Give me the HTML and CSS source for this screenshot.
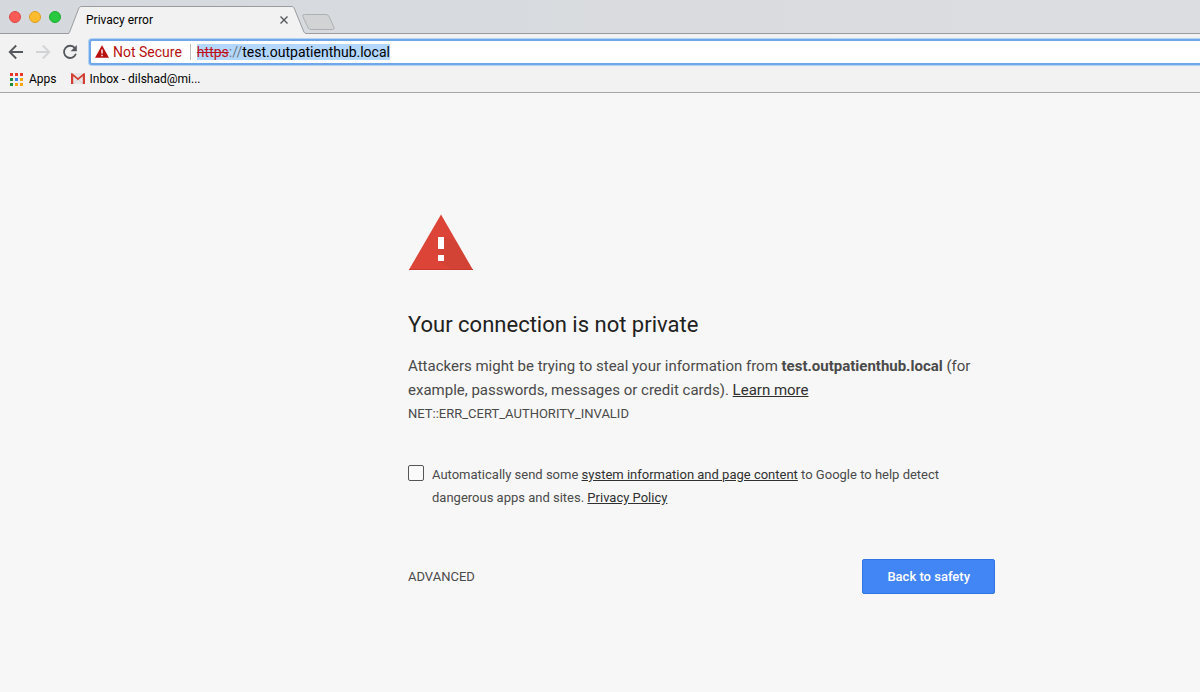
FILE: index.html
```html
<!DOCTYPE html>
<html lang="en">
<head>
  <meta charset="UTF-8">
  <meta name="viewport" content="width=device-width, initial-scale=1.0">
  <title>Privacy error</title>
  <link rel="stylesheet" href="styles.css">
</head>
<body>
  <header class="browser">
    <div class="tab-strip">
      <div class="window-controls">
        <button class="dot dot-close" aria-label="Close window"></button>
        <button class="dot dot-minimize" aria-label="Minimize window"></button>
        <button class="dot dot-zoom" aria-label="Zoom window"></button>
      </div>
      <div class="tab">
        <svg class="tab-shape" viewBox="0 0 238 28" aria-hidden="true">
          <path d="M0 27.500 C1 27.500 1.500 26.500 2 25 L10.500 3 C11.500 .8 12 .5 14 .5 H223 C225 .5 225.500 .8 226.500 3 L235.500 25 C236 26.500 237 27.500 238 27.500" fill="#f2f2f2" stroke="#999b9e"/>
          <path d="M1 27.500 H237" stroke="#f2f2f2"/>
        </svg>
        <span class="tab-title">Privacy error</span>
        <button class="tab-close" aria-label="Close tab">
          <svg width="8" height="8" viewBox="0 0 8 8"><path d="M.5 .5 L7.500 7.500 M7.500 .5 L.5 7.500" stroke="#505357" stroke-width="1.300"/></svg>
        </button>
      </div>
      <button class="new-tab" aria-label="New tab">
        <svg width="33" height="16" viewBox="0 0 33 16"><path d="M2.500 .5 H24 Q26 .5 27 2.500 L32 13.500 Q32.500 15.500 30.500 15.500 H9 Q7 15.500 6 13.500 L.8 2.500 Q.3 .5 2.500 .5 Z" fill="#d1d3d5" stroke="#aeb0b2"/></svg>
      </button>
    </div>

    <div class="toolbar">
      <nav class="nav-buttons">
        <button aria-label="Back">
          <svg width="16" height="16" viewBox="0 0 16 16" fill="none" stroke="#55585c" stroke-width="1.800"><path d="M15 8 H2 M8.200 1.500 L1.700 8 L8.200 14.500"/></svg>
        </button>
        <button aria-label="Forward" disabled>
          <svg width="16" height="16" viewBox="0 0 16 16" fill="none" stroke="#d2d3d4" stroke-width="1.800"><path d="M1 8 H14 M7.800 1.500 L14.300 8 L7.800 14.500"/></svg>
        </button>
        <button aria-label="Reload">
          <svg width="16" height="16" viewBox="0 0 16 16"><path d="M13 4.200 A6.100 6.100 0 1 0 13.900 9.800" fill="none" stroke="#55585c" stroke-width="1.800"/><path d="M14.800 1 V7.200 H8.600 Z" fill="#55585c"/></svg>
        </button>
      </nav>
      <div class="omnibox">
        <svg class="warning" width="14" height="13" viewBox="0 0 14 13" aria-hidden="true">
          <path d="M7 .3 L14 12.700 H0 Z" fill="#b8100f"/>
          <path d="M6.300 4.500 H7.700 V8.500 H6.300 Z M6.300 9.700 H7.700 V11.200 H6.300 Z" fill="#fff"/>
        </svg>
        <span class="not-secure">Not Secure</span>
        <label class="scheme" for="address"><s>https</s>://</label>
        <input class="address" id="address" type="text" value="test.outpatienthub.local" spellcheck="false">
      </div>
    </div>

    <nav class="bookmarks">
      <a href="#">
        <svg width="14" height="14" viewBox="0 0 14 14" aria-hidden="true">
          <path d="M0 1h3v3H0zM5 1h3v3H5zM10 1h3v3h-3z" fill="#e8352b"/>
          <path d="M0 6h3v3H0zM0 11h3v3H0z" fill="#1e8e3e"/>
          <path d="M5 6h3v3H5z" fill="#3f80ec"/>
          <path d="M10 6h3v3h-3zM5 11h3v3H5zM10 11h3v3h-3z" fill="#f6a613"/>
        </svg>
        Apps
      </a>
      <a href="#">
        <svg width="14" height="11" viewBox="0 0 14 11" aria-hidden="true">
          <path d="M1 0 H13 V11 H1 Z" fill="#e6e6e6"/>
          <path d="M2.200 11 L7 6 L11.800 11" fill="none" stroke="#c8c8c8" stroke-width=".6"/>
          <path d="M0 11 V1 Q0 0 1 0 L7 5 L13 0 Q14 0 14 1 V11 H11.800 V3.300 L7 7.300 L2.200 3.300 V11 Z" fill="#d23f31"/>
        </svg>
        Inbox - dilshad@mi...
      </a>
    </nav>
  </header>

  <main class="interstitial">
    <svg class="icon" width="65" height="56" viewBox="0 0 65 56" aria-hidden="true">
      <path d="M33 .5 L65 56 H.8 Z" fill="#db4437"/>
      <path d="M36 23 L48 27 L64.500 55.500 H44 L30 47 L36 46 L30 35 L36 35 Z" fill="#c94236" opacity=".5"/>
      <path d="M1 55.500 H65" stroke="#c9392d"/>
      <path d="M30 23 H36 V35 H30 Z M30 41 H36 V47 H30 Z" fill="#fff"/>
    </svg>
    <h1>Your connection is not private</h1>
    <p class="message">Attackers might be trying to steal your information from <strong>test.outpatienthub.local</strong> (for example, passwords, messages or credit cards). <a href="#">Learn more</a></p>
    <div class="error-code">NET::ERR_CERT_AUTHORITY_INVALID</div>
    <div class="opt-in">
      <input type="checkbox" id="report" aria-labelledby="report-text">
      <p id="report-text"><label for="report">Automatically send some</label> <a href="#">system information and page content</a> to Google to help detect dangerous apps and sites. <a href="#">Privacy Policy</a></p>
    </div>
    <div class="actions">
      <button class="advanced">ADVANCED</button>
      <button class="primary">Back to safety</button>
    </div>
  </main>
</body>
</html>
```
FILE: styles.css
```css
* {
  box-sizing: border-box;
}

body {
  margin: 0;
  background: #f7f7f7;
  color: #4a4a4a;
  font-family: Roboto, "Liberation Sans", sans-serif;
}

button {
  padding: 0;
  border: none;
  background: none;
  font-family: inherit;
}

svg {
  display: block;
}

/* browser window */
.browser {
  background: #f2f2f2;
  border-bottom: 1px solid #a6a6a6;
  color: #000;
}

.tab-strip {
  display: flex;
  align-items: flex-end;
  height: 34px;
  background: linear-gradient(to right, #d5d9dd, #dcdde0);
  box-shadow: inset 0 -1px #999b9e;
}

.window-controls {
  display: flex;
  gap: 8px;
  width: 68px;
  padding: 0 0 11px 9px;
}

.dot {
  flex: none;
  width: 12px;
  height: 12px;
  border-radius: 50%;
}

.dot-close {
  background: #fc5b57;
  border: 1px solid #df4744;
}

.dot-minimize {
  background: #fdbc2e;
  border: 1px solid #de9f25;
}

.dot-zoom {
  background: #28c840;
  border: 1px solid #1dac2c;
}

.tab {
  position: relative;
  display: flex;
  align-items: center;
  justify-content: space-between;
  width: 238px;
  height: 28px;
  padding: 0 18px;
  font-size: 12px;
}

.tab-shape {
  position: absolute;
  inset: 0;
}

.tab-title,
.tab-close {
  position: relative;
}

.new-tab {
  margin: 0 0 4px -4px;
}

.toolbar {
  display: flex;
  align-items: center;
  height: 35px;
}

.nav-buttons {
  display: flex;
  gap: 11px;
  padding: 0 11px 0 8px;
}

.omnibox {
  display: flex;
  flex: 1;
  align-items: center;
  height: 26px;
  padding-left: 4px;
  background: #fff;
  border: 2px solid #70a7e8;
  border-right: none;
  border-radius: 3px 0 0 3px;
  box-shadow: 0 0 0 1px #b5d3f5;
  font-size: 14px;
}

.not-secure {
  margin: 0 6px 0 4px;
  padding-right: 8px;
  border-right: 1px solid #bdbdbd;
  color: #b8100f;
}

.scheme,
.address {
  height: 16px;
  background: #b3d7ff;
  font-size: 14px;
  line-height: 16px;
}

.scheme {
  color: #6c7884;
}

.scheme s {
  color: #c01018;
}

.address {
  field-sizing: content;
  padding: 0;
  border: none;
  outline: none;
  color: #000;
  font-family: inherit;
}

.bookmarks {
  display: flex;
  gap: 14px;
  align-items: center;
  height: 23px;
  padding: 0 10px 4px;
  font-size: 12px;
}

.bookmarks a {
  display: flex;
  gap: 5px;
  align-items: center;
  color: inherit;
  text-decoration: none;
}

/* warning page */
.interstitial {
  max-width: 995px;
  padding: 121px 0 40px min(34vw, 408px);
  font-size: 13px;
  line-height: 23px;
}

.interstitial a {
  color: #303030;
}

h1 {
  margin: 41px 0 15px;
  color: #212121;
  font-size: 22px;
  font-weight: 400;
  line-height: 28px;
}

.message {
  margin: 0;
  font-size: 15px;
  line-height: 24px;
}

.opt-in {
  display: flex;
  gap: 8px;
  margin-top: 38px;
}

.opt-in input {
  flex: none;
  appearance: none;
  width: 16px;
  height: 16px;
  margin: 2px 0 0;
  background: #fafafa;
  border: 1px solid #555;
  border-radius: 2px;
}

.opt-in p {
  margin: 0;
}

.actions {
  display: flex;
  align-items: center;
  justify-content: space-between;
  margin-top: 50px;
}

.advanced {
  color: #4a4a4a;
  font-size: 13px;
}

.primary {
  height: 35px;
  padding: 0 24px;
  background: #4285f4;
  border: 1px solid #2f74e8;
  border-radius: 2px;
  color: #fff;
  font-size: 13px;
  font-weight: 500;
}
```
